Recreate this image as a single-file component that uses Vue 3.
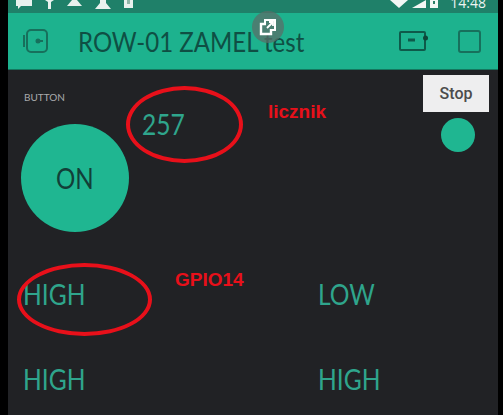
<template>
  <div class="screen">
    <div class="phone">
      <div class="status">
        <div class="status-left">
          <svg width="16" height="9" viewBox="0 0 16 9"><path d="M0 0H16V6H5L2 9V6H0Z" fill="#e8f1ee" /></svg>
          <svg width="9" height="9" viewBox="0 0 9 9"><path d="M0 0H9L6 2V9H3V2Z" fill="#e8f1ee" /></svg>
          <svg width="15" height="6" viewBox="0 0 15 6"><path d="M5 0H10L15 6H0Z" fill="#e8f1ee" /></svg>
          <svg width="16" height="9" viewBox="0 0 16 9"><path d="M5 0H11V3L16 9H0L5 3Z" fill="#e8f1ee" /></svg>
          <svg width="9" height="8" viewBox="0 0 9 8"><path d="M0 0H9V8H0Z" fill="#e8f1ee" /><path d="M3 0H6V4H3Z" fill="#8fb5a8" /></svg>
        </div>
        <div class="status-right">
          <svg width="18" height="8" viewBox="0 0 18 8"><path d="M0 0H18L9 8Z" fill="#f2f7f5" /></svg>
          <svg width="14" height="8" viewBox="0 0 14 8"><path d="M14 0V8H0Z" fill="#f2f7f5" /></svg>
          <svg width="8" height="8" viewBox="0 0 8 8"><path d="M0 0H8V8H0Z" fill="#f2f7f5" /><path d="M3 1H5V4H3Z" fill="#2c7f68" /></svg>
          <span class="clock">14:48</span>
        </div>
      </div>
      <header class="appbar">
        <svg class="project-icon" width="26" height="24" viewBox="0 0 26 24" fill="none" stroke="#17705c" stroke-width="2">
          <rect x="4" y="1" width="20" height="22" rx="4" />
          <path d="M1 6V18M14 12H20" />
          <circle cx="15" cy="12" r="1.5" fill="#17705c" />
        </svg>
        <h1 class="title"><span class="squeeze">ROW-01 ZAMEL test</span></h1>
        <svg class="device-icon" width="30" height="22" viewBox="0 0 30 22" fill="none" stroke="#0e5a4a" stroke-width="2">
          <rect x="1" y="2" width="25" height="18" rx="1" />
          <path d="M9 10H16" stroke-width="3" />
          <circle cx="26.5" cy="8" r="2.5" fill="#0e4538" stroke="none" />
        </svg>
        <span class="stop-square"></span>
      </header>
      <main class="canvas">
        <div class="col-left">
          <div class="top-row">
            <div class="button-widget">
              <span class="widget-label">BUTTON</span>
              <button class="round-btn"><span class="on-label">ON</span></button>
            </div>
            <span class="counter">257</span>
          </div>
          <div class="gpio-grid">
            <span v-for="(v, i) in gpioValues" :key="i" class="gpio">{{ v }}</span>
          </div>
        </div>
        <div class="led-col">
          <div class="stop-toast">Stop</div>
          <span class="led"></span>
        </div>
        <!-- annotations drawn over the screenshot -->
        <span class="ring ring-counter"></span>
        <span class="ring ring-high"></span>
        <span class="note note-licznik">licznik</span>
        <span class="note note-gpio">GPIO14</span>
      </main>
      <div class="overlay-badge">
        <svg width="18" height="18" viewBox="0 0 18 18" fill="none" stroke="#fff" stroke-width="2.4">
          <path d="M7 6H2V16H12V11" />
          <path d="M6 5V2H16V12H13" stroke-width="2" />
          <path d="M8 10L14 4M10 4H14V8" stroke-width="1.8" />
        </svg>
      </div>
    </div>
  </div>
</template>

<script setup>
const gpioValues = ['HIGH', 'LOW', 'HIGH', 'HIGH']
</script>

<style>
html, body { margin: 0; background: #000; }
</style>

<style scoped>
.screen {
  width: 503px;
  height: 415px;
  background: #000;
  overflow: hidden;
  padding: 0 5px 0 8px;
  box-sizing: border-box;
  font-family: Lato, "Liberation Sans", sans-serif;
}

.phone {
  position: relative;
  height: 100%;
  display: flex;
  flex-direction: column;
  background: #212225;
}

.status {
  height: 13px;
  background: #1f8069;
  display: flex;
  justify-content: space-between;
  align-items: flex-start;
  overflow: hidden;
  padding: 0 12px 0 8px;
}

.status-left, .status-right {
  display: flex;
  align-items: flex-start;
}

.status-left { gap: 13px; }
.status-right { gap: 4px; }

.clock {
  font: 14px/8px "Open Sans", sans-serif;
  color: #eef4f2;
  margin: -1px 0 0 8px;
}

.appbar {
  height: 57px;
  box-sizing: border-box;
  background: #1db28e;
  border-bottom: 1px solid #14785f;
  display: flex;
  align-items: center;
  padding: 0 17px 0 15px;
}

.title {
  flex: 1;
  margin: 0 0 0 29px;
  font-size: 27px;
  font-weight: 400;
  color: #0f4f44;
  white-space: nowrap;
}

.squeeze {
  display: inline-block;
  transform: scaleX(0.89);
  transform-origin: left center;
}

.device-icon { margin-right: 29px; }

.stop-square {
  width: 23px;
  height: 23px;
  box-sizing: border-box;
  border: 2px solid #17705c;
  border-radius: 3px;
}

.canvas {
  position: relative;
  flex: 1;
  display: flex;
}

.col-left { flex: 1; }

.top-row { display: flex; }

.button-widget {
  width: 134px;
  padding: 22px 0 0 16px;
  box-sizing: border-box;
  display: flex;
  flex-direction: column;
}

.widget-label {
  font-size: 10px;
  line-height: 11px;
  color: #a9abad;
}

.round-btn {
  width: 108px;
  height: 108px;
  margin: 21px 0 0 -3px;
  padding: 0;
  border: 0;
  border-radius: 50%;
  background: #1fb691;
  color: #123f38;
  font: 400 28px Lato, sans-serif;
}

.on-label {
  display: inline-block;
  transform: scaleX(0.86);
}

.counter {
  margin-top: 35px;
  height: 38px;
  font-size: 29px;
  line-height: 38px;
  color: #2fa58c;
  transform: scaleX(0.85);
  transform-origin: left center;
}

.gpio-grid {
  margin-top: 43px;
  display: grid;
  grid-template-columns: 295px 1fr;
  row-gap: 47px;
  padding-left: 15px;
}

.gpio {
  font-size: 29px;
  line-height: 38px;
  color: #2fa58c;
  justify-self: start;
  transform: scaleX(0.85);
  transform-origin: left center;
}

.led-col {
  width: 90px;
  display: flex;
  flex-direction: column;
  align-items: flex-end;
  padding: 5px 9px 0 0;
  box-sizing: border-box;
}

.stop-toast {
  width: 66px;
  height: 37px;
  text-align: center;
  background: #eeeeef;
  color: #4c4c4c;
  font: 500 16px/37px Roboto, sans-serif;
}

.led {
  width: 34px;
  height: 34px;
  margin: 6px 14px 0 0;
  border-radius: 50%;
  background: #1fb691;
}

.ring {
  position: absolute;
  border: 4px solid #e8101a;
  border-radius: 50%;
  box-sizing: border-box;
}

.ring-counter { left: 118px; top: 16px; width: 117px; height: 77px; }
.ring-high { left: 9px; top: 193px; width: 135px; height: 73px; }

.note {
  position: absolute;
  color: #e8101a;
  font: 700 19px/22px "Liberation Sans", sans-serif;
}

.note-licznik { left: 260px; top: 31px; }
.note-gpio { left: 167px; top: 199px; }

.overlay-badge {
  position: absolute;
  left: 244px;
  top: 11px;
  width: 32px;
  height: 32px;
  border-radius: 50%;
  background: rgba(90, 110, 104, 0.75);
  display: flex;
  align-items: center;
  justify-content: center;
}
</style>
